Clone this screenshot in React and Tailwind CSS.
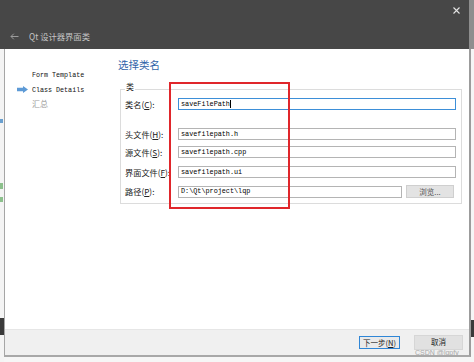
const cjk = "font-['Noto_Sans_CJK_SC',sans-serif]";
const mono = "font-['Liberation_Mono',monospace]";

function Label({ text, k }) {
  return (
    <span className={`${cjk} w-[53px] shrink-0 whitespace-nowrap text-[8.2px] leading-none text-[#222]`}>
      {text}(<span className="underline">{k}</span>):
    </span>
  );
}

function Field({ value, focused, cursor }) {
  return (
    <div
      className={`flex h-[12px] flex-1 items-center bg-white pl-[2px] ${
        focused ? "border border-[#3d8fd8]" : "border border-[#b4b4b4]"
      }`}
    >
      <span className={`${mono} text-[6.8px] leading-none text-black`}>{value}</span>
      {cursor && <span className="ml-[0.5px] h-[8px] w-px bg-black" />}
    </div>
  );
}

export default function App() {
  return (
    <div className="relative flex h-[362px] w-[474px] flex-col overflow-hidden bg-[#f6f6f6]">
      {/* title bar */}
      <div className="flex h-[49px] shrink-0">
        <div className="flex w-[469px] flex-col bg-[#474747]">
          <div className="flex h-[20px] items-center justify-end pr-[9px]">
            <svg width="7" height="7" viewBox="0 0 7 7">
              <path d="M0.5 0.5 L6.5 6.5 M6.5 0.5 L0.5 6.5" stroke="#e4e4e4" strokeWidth="1.1" />
            </svg>
          </div>
          <div className="mt-[10px] flex h-[12px] items-center pl-[10px]">
            <svg width="9" height="7" viewBox="0 0 9 7">
              <path d="M8.5 3.5 H1 M3.8 0.7 L1 3.5 L3.8 6.3" stroke="#9c9c9c" strokeWidth="1" fill="none" />
            </svg>
            <span className={`${cjk} ml-[10px] text-[8.3px] leading-none text-[#c4c4c4]`}>Qt 设计器界面类</span>
          </div>
        </div>
        <div className="flex-1 bg-[#8e8e8e]" />
      </div>

      <div className="flex flex-1">
        {/* background app, left */}
        <div className="flex w-[4px] flex-col bg-[#f4f4f4]">
          <div className="mt-[70px] h-[4px] w-[3px] bg-[#6aa0cf]" />
          <div className="mt-[60px] h-[6px] w-[3px] bg-[#8cc08c]" />
          <div className="mt-[8px] h-[5px] w-[3px] bg-[#8cc08c]" />
          <div className="mt-[116px] h-[17px] w-[4px] bg-[#3a3a3a]" />
        </div>

        {/* window */}
        <div className="flex w-[467px] flex-col self-start border-x border-l-[#a6a6a6] border-r-2 border-r-[#9c9c9c] border-b-2 border-b-[#a8a8a8]">
          <div className="flex h-[280px] bg-white">
            {/* wizard steps */}
            <div className="flex w-[113px] flex-col pt-[19px]">
              <div className={`${mono} flex h-[14.5px] items-center pl-[27px] text-[6.7px] text-[#111]`}>Form Template</div>
              <div className="flex h-[14.5px] items-center pl-[12px]">
                <svg width="11" height="7" viewBox="0 0 11 7">
                  <path d="M0 1.8 H6 V0 L11 3.5 L6 7 V5.2 H0 Z" fill="#5d9ad6" />
                </svg>
                <span className={`${mono} ml-[4px] text-[6.7px] text-[#111]`}>Class Details</span>
              </div>
              <div className={`${cjk} flex h-[14.5px] items-center pl-[27px] text-[8px] text-[#9a9a9a]`}>汇总</div>
            </div>

            {/* page */}
            <div className="flex flex-1 flex-col">
              <div className={`${cjk} mt-[10px] h-[12px] text-[10.5px] leading-[12px] text-[#2f63a8]`}>选择类名</div>
              <div className="relative ml-[2px] mt-[18px] flex h-[115px] w-[342px] flex-col border border-[#dcdcdc] pl-[4px] pr-[5px]">
                <span className={`${cjk} absolute left-[4px] top-[-7px] bg-white px-[1px] text-[8px] leading-[8px] text-[#222]`}>类</span>
                <div className="mt-[8px] flex items-center">
                  <Label text="类名" k="C" />
                  <Field value="saveFilePath" focused cursor />
                </div>
                <div className="mt-[18px] flex items-center">
                  <Label text="头文件" k="H" />
                  <Field value="savefilepath.h" />
                </div>
                <div className="mt-[6px] flex items-center">
                  <Label text="源文件" k="S" />
                  <Field value="savefilepath.cpp" />
                </div>
                <div className="mt-[8px] flex items-center">
                  <Label text="界面文件" k="F" />
                  <Field value="savefilepath.ui" />
                </div>
                <div className="mt-[7px] flex items-center">
                  <Label text="路径" k="P" />
                  <Field value="D:\Qt\project\lqp" />
                  <button className={`${cjk} ml-[4px] mr-[2px] flex h-[13px] w-[48px] items-center justify-center border border-[#cfcfcf] bg-[#e3e3e3] text-[7.5px] leading-none text-[#555]`}>
                    浏览...
                  </button>
                </div>
              </div>
            </div>
          </div>

          {/* button bar */}
          <div className="flex h-[26px] items-center justify-end gap-[14px] border-t border-[#e6e6e6] bg-[#f0f0f0] pr-[6px]">
            <button className={`${cjk} flex h-[13px] w-[41px] items-center justify-center border border-[#2f86d6] bg-[#eaeaea] text-[7.5px] leading-none text-[#222]`}>
              下一步(<span className="underline">N</span>)
            </button>
            <button className={`${cjk} flex h-[15px] w-[49px] items-center justify-center border border-[#d6d6d6] bg-[#e1e1e1] pb-[2px] text-[7.5px] leading-none text-[#222]`}>
              取消
            </button>
          </div>
        </div>

        {/* background app, right */}
        <div className="flex flex-1 flex-col bg-[#f6f6f6]">
          <div className="mt-[271px] h-[17px] w-full bg-[#3a3a3a]" />
        </div>
      </div>

      {/* annotation box */}
      <div className="absolute left-[169px] top-[82px] h-[127px] w-[121px] border-2 border-[#e0262b]" />
      {/* watermark */}
      <span className="absolute left-[415px] top-[349px] font-['Liberation_Sans',sans-serif] text-[7px] leading-none text-[#a9a9a9]">
        CSDN @lqpfy
      </span>
    </div>
  );
}
